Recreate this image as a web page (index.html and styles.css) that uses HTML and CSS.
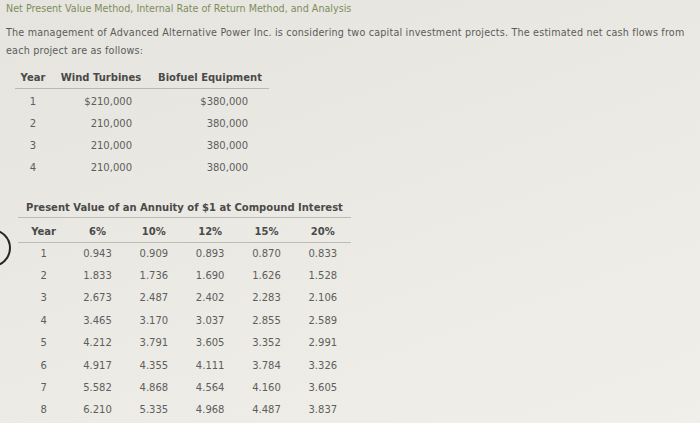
FILE: index.html
```html
<!DOCTYPE html>
<html>
<head>
<meta charset="utf-8">
<link rel="stylesheet" href="styles.css">
</head>
<body>
<div class="page">
  <h1 class="title">Net Present Value Method, Internal Rate of Return Method, and Analysis</h1>
  <p class="intro">The management of Advanced Alternative Power Inc. is considering two capital investment projects. The estimated net cash flows from each project are as follows:</p>

  <table class="cash">
    <thead>
      <tr><th class="c-year">Year</th><th class="c-wind">Wind Turbines</th><th class="c-bio">Biofuel Equipment</th></tr>
    </thead>
    <tbody>
      <tr><td class="c-year">1</td><td class="c-wind">$210,000</td><td class="c-bio">$380,000</td></tr>
      <tr><td class="c-year">2</td><td class="c-wind">210,000</td><td class="c-bio">380,000</td></tr>
      <tr><td class="c-year">3</td><td class="c-wind">210,000</td><td class="c-bio">380,000</td></tr>
      <tr><td class="c-year">4</td><td class="c-wind">210,000</td><td class="c-bio">380,000</td></tr>
    </tbody>
  </table>

  <div class="annuity">
    <div class="annuity-title">Present Value of an Annuity of $1 at Compound Interest</div>
    <table class="pv">
      <thead>
        <tr><th class="p-year">Year</th><th>6%</th><th>10%</th><th>12%</th><th>15%</th><th>20%</th></tr>
      </thead>
      <tbody>
        <tr><td class="p-year">1</td><td>0.943</td><td>0.909</td><td>0.893</td><td>0.870</td><td>0.833</td></tr>
        <tr><td class="p-year">2</td><td>1.833</td><td>1.736</td><td>1.690</td><td>1.626</td><td>1.528</td></tr>
        <tr><td class="p-year">3</td><td>2.673</td><td>2.487</td><td>2.402</td><td>2.283</td><td>2.106</td></tr>
        <tr><td class="p-year">4</td><td>3.465</td><td>3.170</td><td>3.037</td><td>2.855</td><td>2.589</td></tr>
        <tr><td class="p-year">5</td><td>4.212</td><td>3.791</td><td>3.605</td><td>3.352</td><td>2.991</td></tr>
        <tr><td class="p-year">6</td><td>4.917</td><td>4.355</td><td>4.111</td><td>3.784</td><td>3.326</td></tr>
        <tr><td class="p-year">7</td><td>5.582</td><td>4.868</td><td>4.564</td><td>4.160</td><td>3.605</td></tr>
        <tr><td class="p-year">8</td><td>6.210</td><td>5.335</td><td>4.968</td><td>4.487</td><td>3.837</td></tr>
      </tbody>
    </table>
  </div>
  <div class="radio-edge"></div>
</div>
</body>
</html>
```
FILE: styles.css
```css
html, body {
  margin: 0;
  padding: 0;
}
body {
  background: linear-gradient(160deg, #e5e4de 0%, #eae9e4 45%, #f0efea 100%);
  font-family: "DejaVu Sans", Verdana, sans-serif;
  color: #5a5a58;
  width: 700px;
  height: 423px;
  overflow: hidden;
}
.page {
  position: relative;
  padding: 2px 0 0 6px;
}
.title {
  margin: 0;
  font-size: 9.6px;
  font-weight: normal;
  line-height: 13px;
  color: #7f8d5a;
}
.intro {
  margin: 9px 0 0 0;
  width: 692px;
  font-size: 9.6px;
  letter-spacing: 0.2px;
  line-height: 18px;
  color: #5c5c5a;
}
table {
  border-collapse: collapse;
  font-size: 10px;
}
th, td {
  box-sizing: border-box;
  padding: 0;
}
.cash {
  margin: 7px 0 0 9px;
}
.cash th {
  font-weight: bold;
  color: #4a4a48;
  height: 21px;
  text-align: center;
  border-bottom: 1px solid #b9b9b4;
}
.cash td {
  height: 22px;
  padding-top: 4px;
  text-align: right;
  color: #5e5e5c;
}
.cash .c-year { width: 36px; text-align: center; }
.cash .c-wind { width: 100px; }
.cash .c-bio { width: 118px; }
.cash td.c-wind { padding-right: 19px; }
.cash td.c-bio { padding-right: 21px; }

.annuity {
  margin: 25px 0 0 12px;
  width: 333px;
}
.annuity-title {
  text-align: center;
  font-size: 10px;
  font-weight: bold;
  color: #4a4a48;
  line-height: 14px;
  border-bottom: 1px solid #bdbdb8;
  padding-bottom: 2px;
}
.pv {
  width: 333px;
}
.pv th {
  font-weight: bold;
  color: #4a4a48;
  height: 24px;
  padding-top: 3px;
  text-align: center;
  border-bottom: 1px solid #bdbdb8;
  width: 57px;
}
.pv td {
  height: 22.4px;
  padding-top: 0;
  text-align: center;
  color: #5e5e5c;
}
.pv .p-year { width: 52px; }
.radio-edge {
  position: absolute;
  left: -27px;
  top: 229px;
  width: 34px;
  height: 34px;
  border: 2px solid #262624;
  border-radius: 50%;
}
```
